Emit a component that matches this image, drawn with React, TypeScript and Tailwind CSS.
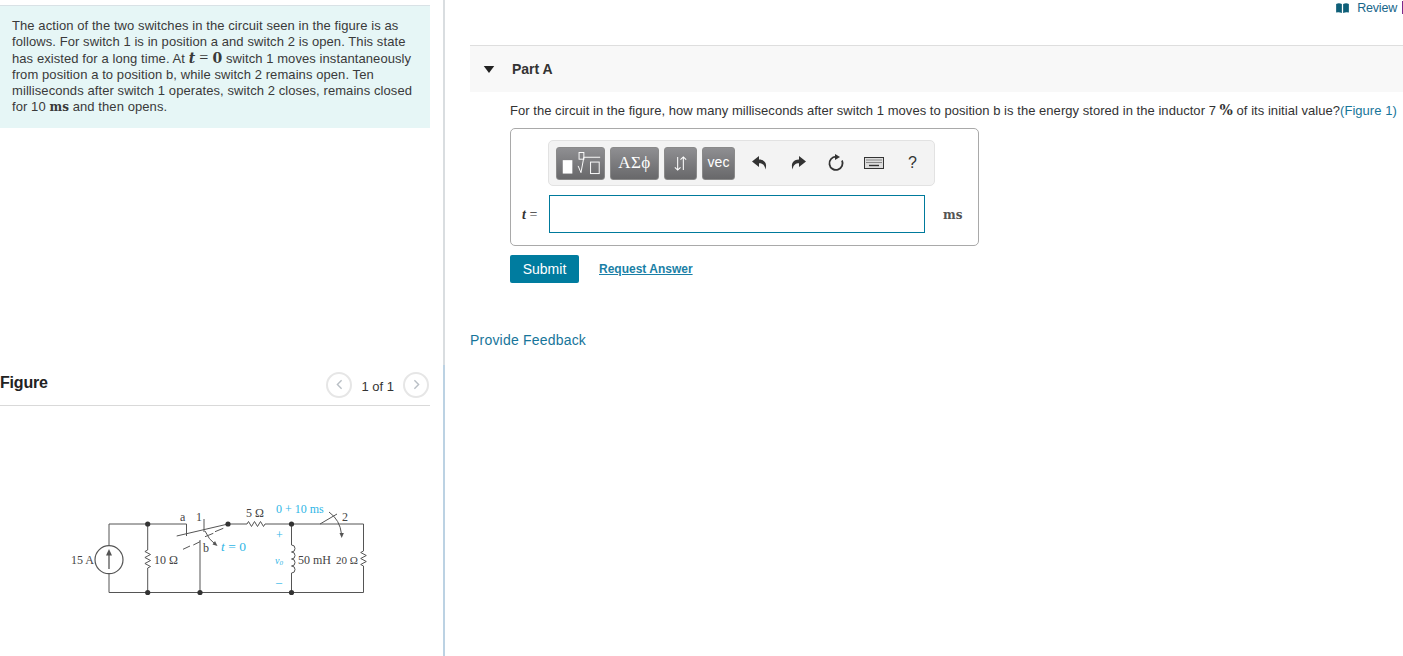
import React from "react";

function Circuit() {
  const s = "#555";
  const c = "#2fb6e6";
  const serif = { fontFamily: '"Liberation Serif", serif' };
  return (
    <svg viewBox="50 490 330 120" className="block w-[330px] h-[120px]" style={serif}>
      <g fill="none" stroke={s} strokeWidth="1">
        <path d="M109 546V524H186.5V536" />
        <path d="M109 574V592.5H363.5V568" />
        <path d="M363.5 551V524H320" />
        <path d="M320 524L337 514" />
        <path d="M147.7 524V550M147.7 568V592" />
        <path d="M200 592V540" />
        <path d="M228 524H247M265 524H320" />
        <path d="M291.5 524V545M291.5 573V592" />
        <path d="M176.7 536L228 524" />
        <path d="M204 519V532" />
        <path d="M183 549.3L190 546M193.3 545L200 541.7M205 536.7L213.3 533.3M215 531.7L223.3 528.3" />
        <path d="M247 524l1.5-2.5 3 5 3-5 3 5 3-5 3 5 1.5-2.5" />
        <path d="M147.7 550l-2.8 1.5 5.6 3-5.6 3 5.6 3-5.6 3 5.6 3-2.8 1.5" />
        <path d="M363.5 551l-2.8 1.5 5.6 3-5.6 3 5.6 3-5.6 3 2.8 1.5V568" />
        <path d="M291.5 545a3.5 3.5 0 0 1 0 7a3.5 3.5 0 0 1 0 7a3.5 3.5 0 0 1 0 7a3.5 3.5 0 0 1 0 7" />
        <circle cx="109" cy="559.7" r="14" strokeWidth="1.2" />
        <path d="M109 569V553" strokeWidth="1.3" />
        <path d="M329 512Q340 520 341.5 534" />
        <path d="M205 531Q209 540 215 544" />
      </g>
      <path d="M109 549l-3 6.5h6z" fill={s} />
      <path d="M341.7 538l-2.2-5h4.4z" fill={s} />
      <path d="M217.5 546l-5-1.5 2.5-3.5z" fill={s} />
      {[[147.7, 524], [147.7, 592.5], [200, 592.5], [228, 524], [291.5, 524], [291.5, 592.5]].map(([x, y]) => (
        <circle key={`${x}-${y}`} cx={x} cy={y} r="2.6" fill="#333" />
      ))}
      <g fontSize="12" fill="#444">
        <text x="71" y="564">15 A</text>
        <text x="154" y="564">10 Ω</text>
        <text x="180" y="521">a</text>
        <text x="196" y="521">1</text>
        <text x="246" y="516.5">5 Ω</text>
        <text x="342" y="521">2</text>
        <text x="203" y="552">b</text>
        <text x="298" y="564">50 mH</text>
        <text x="336" y="564" fontSize="11">20 Ω</text>
      </g>
      <g fontSize="12" fill={c}>
        <text x="276" y="513">0 + 10 ms</text>
        <text x="221" y="551" fontSize="13.5"><tspan fontStyle="italic">t</tspan> = 0</text>
        <text x="276" y="539">+</text>
        <text x="275" y="564" fontStyle="italic" fontSize="10">v<tspan fontSize="7" dy="1">0</tspan></text>
        <text x="276" y="586">–</text>
      </g>
    </svg>
  );
}

function ToolBtn({ w, children }: { w: string; children: React.ReactNode }) {
  return (
    <div className={`${w} h-[33px] rounded-[3px] border border-[#8a8a8a] bg-gradient-to-b from-[#8f8f92] to-[#68686a] flex items-center justify-center text-white`}>
      {children}
    </div>
  );
}

export default function App() {
  return (
    <div className="w-[1403px] h-[656px] overflow-hidden flex bg-white text-[#333] text-[13px] leading-[16px]" style={{ fontFamily: '"Liberation Sans", Arial, sans-serif' }}>
      {/* left column */}
      <div className="w-[445px] shrink-0 flex flex-col">
        <div className="h-[365px] border-r-2 border-[#d9dde0] pt-[5px]">
          <div className="w-[430px] h-[123px] bg-[#e6f6f6] border-t border-[#d9e2e6] pl-[12px] pt-[12px] text-[13px] leading-[16px] tracking-[0.08px] text-[#3a3a3a] whitespace-nowrap">
            <div>The action of the two switches in the circuit seen in the figure is as</div>
            <div>follows. For switch 1 is in position a and switch 2 is open. This state</div>
            <div>
              has existed for a long time. At{" "}
              <span className="font-bold text-[14px]" style={{ fontFamily: '"DejaVu Serif", serif' }}>
                <i>t</i>
              </span>
              <span className="mx-[4px] text-[16px]" style={{ fontFamily: '"Liberation Serif", serif' }}>=</span>
              <span className="font-bold text-[14px]" style={{ fontFamily: '"DejaVu Serif", serif' }}>0</span>{" "}
              switch 1 moves instantaneously
            </div>
            <div>from position a to position b, while switch 2 remains open. Ten</div>
            <div>milliseconds after switch 1 operates, switch 2 closes, remains closed</div>
            <div>for 10 <span className="font-bold text-[12px]" style={{ fontFamily: '"DejaVu Serif", serif' }}>ms</span> and then opens.</div>
          </div>
        </div>
        <div className="h-[291px] border-r-2 border-[#bcd2e3]">
          <div className="w-[430px] h-[41px] border-b border-[#d9d9d9] flex items-center">
            <span className="text-[16px] font-bold text-[#222] mt-[-4px] tracking-[-0.2px]">Figure</span>
            <div className="ml-auto flex items-center mt-[-1px]">
              <div className="w-[26px] h-[26px] rounded-full border-2 border-[#e6e6e6] flex items-center justify-center">
                <svg viewBox="0 0 10 14" className="w-[7px] h-[11px]" fill="none" stroke="#b9bfc5" strokeWidth="2"><path d="M8 1L2 7l6 6" /></svg>
              </div>
              <span className="ml-[9px] mr-[9px] text-[13px] text-[#333] mt-[4px]">1 of 1</span>
              <div className="w-[26px] h-[26px] rounded-full border-2 border-[#e6e6e6] flex items-center justify-center mr-[1px]">
                <svg viewBox="0 0 10 14" className="w-[7px] h-[11px]" fill="none" stroke="#b9bfc5" strokeWidth="2"><path d="M2 1l6 6-6 6" /></svg>
              </div>
            </div>
          </div>
          <div className="ml-[50px] mt-[84px]">
            <Circuit />
          </div>
        </div>
      </div>

      {/* right column */}
      <div className="flex-1 min-w-0 flex flex-col">
        <div className="h-[45px] flex justify-end items-start">
          <div className="flex items-center h-[15px] text-[12.5px] tracking-[-0.2px] text-[#17668a]">
            <svg viewBox="0 0 14 11" className="w-[13px] h-[10px] mr-[8px]" fill="#0e5f78"><path d="M0 1q3-1.5 6.3 0V11Q3 9.5 0 10.5zM7.7 1q3.3-1.5 6.3 0v9.5q-3-1-6.3.5z" /></svg>
            <span>Review</span>
            <span className="ml-[5px] w-[1px] h-[13px] bg-[#7c2a8c]" />
          </div>
        </div>
        <div className="ml-[25px] h-[47px] bg-[#f8f8f8] border-t border-[#dedede] flex items-center">
          <svg viewBox="0 0 12 8" className="ml-[13px] w-[12px] h-[7px]" fill="#222"><path d="M0 0h12L6 8z" /></svg>
          <span className="ml-[17px] text-[14px] font-bold text-[#333]">Part A</span>
        </div>
        <div className="ml-[65px] mt-[10px] whitespace-nowrap text-[13px] leading-[16px] tracking-[0.04px] text-[#333]">
          For the circuit in the figure, how many milliseconds after switch 1 moves to position b is the energy stored in the inductor 7 <span className="font-bold text-[14px]" style={{ fontFamily: '"DejaVu Serif", serif' }}>%</span> of its initial value?<span className="text-[#17759a]">(Figure 1)</span>
        </div>
        <div className="ml-[65px] mt-[9px] w-[469px] h-[118px] rounded-[5px] border border-[#a9a9a9] flex flex-col">
          <div className="ml-[37px] mt-[11px] w-[387px] h-[46px] rounded-[5px] border border-[#e2e2e2] bg-[#f3f3f3] flex items-center pl-[7px]">
            <div className="flex gap-[5px]">
              <ToolBtn w="w-[49px]">
                <svg viewBox="0 0 49 33" className="w-[49px] h-[33px]" fill="none" stroke="#fff" strokeWidth="1">
                  <rect x="6" y="13" width="10" height="14" fill="#fff" stroke="none" />
                  <rect x="23" y="5" width="5" height="7" />
                  <path d="M22 19l3 7 3-16h17" />
                  <rect x="35" y="15" width="9" height="12" />
                </svg>
              </ToolBtn>
              <ToolBtn w="w-[49px]">
                <span className="text-[17px] tracking-[0.5px]" style={{ fontFamily: '"Liberation Serif", serif' }}>ΑΣϕ</span>
              </ToolBtn>
              <ToolBtn w="w-[33px]">
                <svg viewBox="0 0 18 18" className="w-[17px] h-[17px]" fill="none" stroke="#fff" strokeWidth="1.1">
                  <path d="M6 2v14M3 13l3 3 3-3M12 16V2M9 5l3-3 3 3" />
                </svg>
              </ToolBtn>
              <ToolBtn w="w-[33px]">
                <span className="text-[14px] mt-[-2px]">vec</span>
              </ToolBtn>
            </div>
            <svg viewBox="0 0 16 16" className="ml-[17px] w-[16px] h-[16px]" fill="#333"><path d="M7 1L0 6.5 7 12V8.2c3.5 0 5.8 1.6 6.3 6.3C15.5 9 13 4.6 7 4.6z" /></svg>
            <svg viewBox="0 0 16 16" className="ml-[22px] w-[16px] h-[16px]" fill="#333"><path d="M9 1l7 5.5L9 12V8.2c-3.5 0-5.8 1.6-6.3 6.3C.5 9 3 4.6 9 4.6z" /></svg>
            <svg viewBox="0 0 18 18" className="ml-[21px] w-[18px] h-[18px]" fill="none" stroke="#333" strokeWidth="1.8"><path d="M15 6.5A6.6 6.6 0 1 1 9 2.7" /><path d="M8 0L13 3 8 6z" fill="#333" stroke="none" /></svg>
            <svg viewBox="0 0 20 12" className="ml-[19px] w-[20px] h-[12px]" fill="none" stroke="#333"><rect x="0.5" y="0.5" width="19" height="11" fill="#dcdcdc" /><path d="M2.5 3h15M2.5 5.5h15" strokeDasharray="1 1" /><path d="M5 8.5h10" strokeWidth="1.4" /></svg>
            <span className="ml-[24px] text-[16px] text-[#333]">?</span>
          </div>
          <div className="flex items-center mt-[9px]">
            <span className="w-[38px] pl-[11px] text-[14px] text-[#333] whitespace-nowrap mt-[2px]" style={{ fontFamily: '"Liberation Serif", serif' }}><i className="font-bold">t</i> =</span>
            <div className="w-[376px] h-[38px] border border-[#007a9c] bg-white" />
            <span className="ml-[18px] text-[12px] font-bold text-[#555] mt-[2px]" style={{ fontFamily: '"DejaVu Serif", serif' }}>ms</span>
          </div>
        </div>
        <div className="ml-[65px] mt-[9px] flex items-center">
          <div className="w-[69px] h-[28px] rounded-[2px] bg-[#007c9f] text-white text-[14px] flex items-center justify-center">Submit</div>
          <span className="ml-[20px] text-[12px] font-bold underline text-[#1a7fa6]">Request Answer</span>
        </div>
        <div className="ml-[25px] mt-[49px] text-[14px] tracking-[0.2px] text-[#17759a]">Provide Feedback</div>
      </div>
    </div>
  );
}
